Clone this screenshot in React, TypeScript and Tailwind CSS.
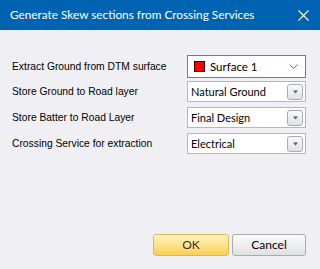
import React from "react";

const uiFont = { fontFamily: 'Lato, "Noto Sans", sans-serif' };

function SmallDrop() {
  return (
    <div className="w-[16px] h-[16px] rounded-[3px] border border-[#a9abb0] bg-gradient-to-b from-[#fbfbfc] to-[#dfe1e5] flex items-center justify-center">
      <svg width="7" height="4" viewBox="0 0 7 4">
        <path d="M1 0.5 L6 0.5 L3.5 3.5 Z" fill="#5a5e66" />
      </svg>
    </div>
  );
}

function Combo({ text }: { text: string }) {
  return (
    <div className="w-[119px] h-[21px] bg-white border border-[#b4b7bd] flex items-center justify-between pl-[3px] pr-[2px]">
      <span className="text-[11px] text-black leading-none" style={uiFont}>{text}</span>
      <SmallDrop />
    </div>
  );
}

export default function App() {
  const labelFont = { fontFamily: '"Liberation Sans", Arial, sans-serif' };
  return (
    <div className="w-[320px] h-[269px] bg-[#f0f0f4] flex flex-col overflow-hidden">
      <div className="h-[30px] bg-[#0063b1] flex items-center justify-between pl-[10px] pr-[11px] shrink-0">
        <span className="text-white text-[11.8px]" style={uiFont}>
          Generate Skew sections from Crossing Services
        </span>
        <svg width="11" height="11" viewBox="0 0 11 11">
          <path d="M0.5 0.5 L10.5 10.5 M10.5 0.5 L0.5 10.5" stroke="#ffffff" strokeWidth="1.1" />
        </svg>
      </div>
      <div className="flex-1 flex flex-col pl-[12px] pr-[14px] pt-[25px] pb-[13px]">
        <div className="flex flex-col text-[10.3px] text-black" style={labelFont}>
          <div className="h-[23px] flex items-center justify-between">
            <span>Extract Ground from DTM surface</span>
            <div className="w-[119px] h-[23px] bg-white border border-[#7a7a7a] flex items-center justify-between pl-[6px] pr-[7px]">
              <div className="flex items-center gap-[5px]">
                <div className="w-[11px] h-[11px] bg-[#ff0000] border border-[#3a0000]" />
                <span className="text-[11.5px] leading-none" style={uiFont}>Surface 1</span>
              </div>
              <svg width="9" height="5" viewBox="0 0 9 5">
                <path d="M0.5 0.5 L4.5 4.5 L8.5 0.5" stroke="#555" strokeWidth="0.9" fill="none" />
              </svg>
            </div>
          </div>
          <div className="h-[21px] mt-[3px] flex items-center justify-between">
            <span>Store Ground to Road layer</span>
            <Combo text="Natural Ground" />
          </div>
          <div className="h-[21px] mt-[5px] flex items-center justify-between">
            <span>Store Batter to Road Layer</span>
            <Combo text="Final Design" />
          </div>
          <div className="h-[21px] mt-[5px] flex items-center justify-between">
            <span>Crossing Service for extraction</span>
            <Combo text="Electrical" />
          </div>
        </div>
        <div className="flex-1" />
        <div className="flex justify-end gap-[3px] text-[12px]" style={uiFont}>
          <button className="w-[76px] h-[22px] rounded-[3px] border border-[#e5b74b] bg-gradient-to-b from-[#fff3c8] via-[#fde38a] to-[#f9cf52] text-[#333] flex items-center justify-center">
            OK
          </button>
          <button className="w-[74px] h-[22px] rounded-[3px] border border-[#a7a9ad] bg-gradient-to-b from-[#fdfdfd] to-[#dfe0e3] text-black flex items-center justify-center">
            Cancel
          </button>
        </div>
      </div>
    </div>
  );
}
